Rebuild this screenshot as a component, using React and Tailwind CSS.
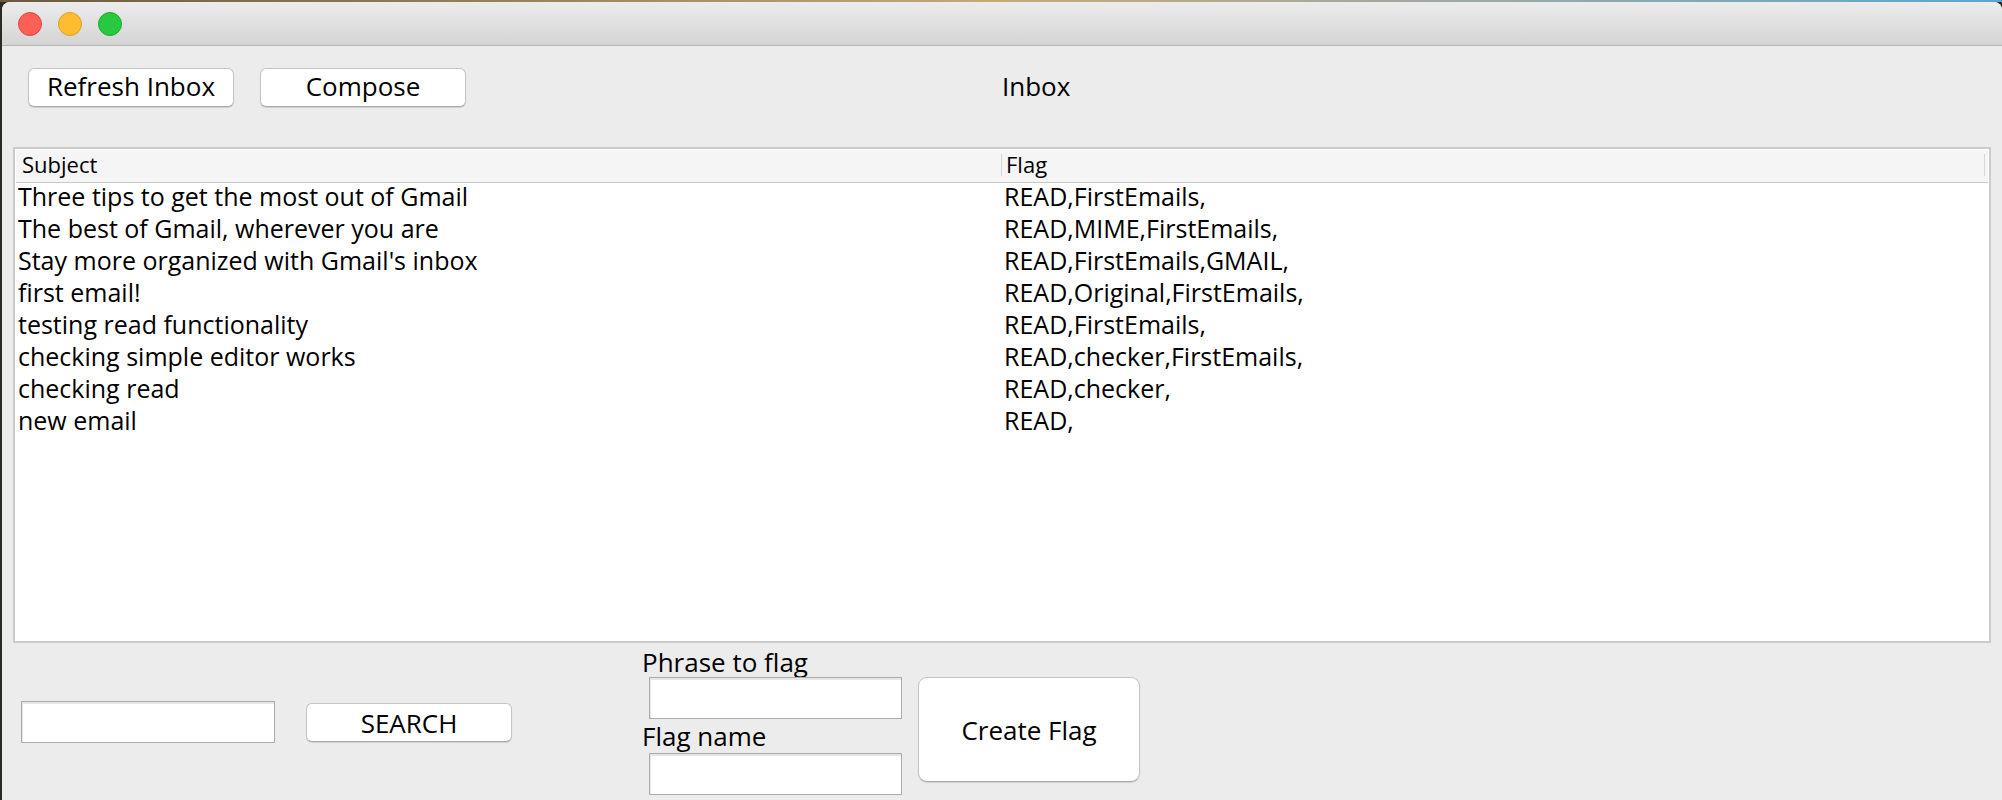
import React from "react";

const rows = [
  ["Three tips to get the most out of Gmail", "READ,FirstEmails,"],
  ["The best of Gmail, wherever you are", "READ,MIME,FirstEmails,"],
  ["Stay more organized with Gmail's inbox", "READ,FirstEmails,GMAIL,"],
  ["first email!", "READ,Original,FirstEmails,"],
  ["testing read functionality", "READ,FirstEmails,"],
  ["checking simple editor works", "READ,checker,FirstEmails,"],
  ["checking read", "READ,checker,"],
  ["new email", "READ,"],
];

function MacButton({ className, children }) {
  return (
    <div
      className={
        "flex items-center justify-center bg-white border border-[#c4c4c4] border-b-[#a9a9a9] rounded-[6px] shadow-[0_1px_1px_rgba(0,0,0,0.12)] text-[26px] text-black leading-[30px] " +
        className
      }
    >
      {children}
    </div>
  );
}

function Field({ className }) {
  return (
    <div
      className={
        "bg-white border border-[#ababab] shadow-[inset_1px_2px_0_#e6e6e6] " + className
      }
    />
  );
}

export default function App() {
  return (
    <div className="w-[2002px] h-[800px] overflow-hidden bg-[#2c2a26] font-['Open_Sans',sans-serif] text-black">
      <div className="h-[2px] bg-gradient-to-r from-[#6b5a3e] via-[#c9a878] to-[#5aa6cf]" />
      <div className="ml-[2px] w-[2000px] h-[798px] bg-[#ececec] rounded-t-[8px] flex flex-col">
        {/* Title bar */}
        <div className="h-[44px] shrink-0 rounded-t-[8px] bg-gradient-to-b from-[#ececec] to-[#d4d4d4] border-b border-[#b4b4b4] flex items-center pl-[16px] gap-[16px]">
          <span className="w-[24px] h-[24px] rounded-full bg-[#fe5f57] border border-[#e0443e]" />
          <span className="w-[24px] h-[24px] rounded-full bg-[#febc2e] border border-[#dea123]" />
          <span className="w-[24px] h-[24px] rounded-full bg-[#28c840] border border-[#1aab29]" />
        </div>

        {/* Toolbar */}
        <div className="h-[101px] shrink-0 flex items-start pt-[22px] pl-[26px]">
          <MacButton className="w-[206px] h-[39px] pb-[3px]">Refresh Inbox</MacButton>
          <MacButton className="w-[206px] h-[39px] ml-[26px] pb-[3px]">Compose</MacButton>
          <div className="ml-[536px] h-[39px] flex items-center pb-[3px] text-[26px] leading-[30px]">
            Inbox
          </div>
        </div>

        {/* Table */}
        <div className="ml-[11px] w-[1978px] h-[496px] shrink-0 border-2 border-[#cbcbcb] p-[1px] bg-white flex flex-col">
          <div className="h-[33px] shrink-0 bg-[#f5f5f5] border-b border-[#c9c9c9] flex text-[22px] leading-[28px]">
            <div className="w-[985px] pl-[6px]">Subject</div>
            <div className="w-px h-[22px] mt-[4px] bg-[#d6d6d6]" />
            <div className="flex-1 pl-[4px]">Flag</div>
            <div className="w-px h-[22px] mt-[4px] bg-[#d6d6d6] mr-[3px]" />
          </div>
          <div className="flex flex-col text-[25px] leading-[27px]">
            {rows.map(([s, f]) => (
              <div key={s} className="h-[32px] flex whitespace-nowrap">
                <div className="w-[986px] pl-[2px]">{s}</div>
                <div className="flex-1 pl-[2px]">{f}</div>
              </div>
            ))}
          </div>
        </div>

        {/* Bottom controls */}
        <div className="flex items-start">
          <Field className="ml-[19px] mt-[58px] w-[254px] h-[42px]" />
          <MacButton className="ml-[31px] mt-[60px] w-[206px] h-[39px]">SEARCH</MacButton>
          <div className="ml-[130px] mt-[4px] flex flex-col">
            <div className="text-[26px] leading-[30px] whitespace-nowrap">Phrase to flag</div>
            <Field className="ml-[7px] w-[253px] h-[42px]" />
            <div className="mt-[2px] text-[26px] leading-[30px] whitespace-nowrap">Flag name</div>
            <Field className="ml-[7px] mt-[2px] w-[253px] h-[42px]" />
          </div>
          <MacButton className="ml-[16px] mt-[34px] w-[222px] h-[105px] rounded-[9px]">Create Flag</MacButton>
        </div>
      </div>
    </div>
  );
}
